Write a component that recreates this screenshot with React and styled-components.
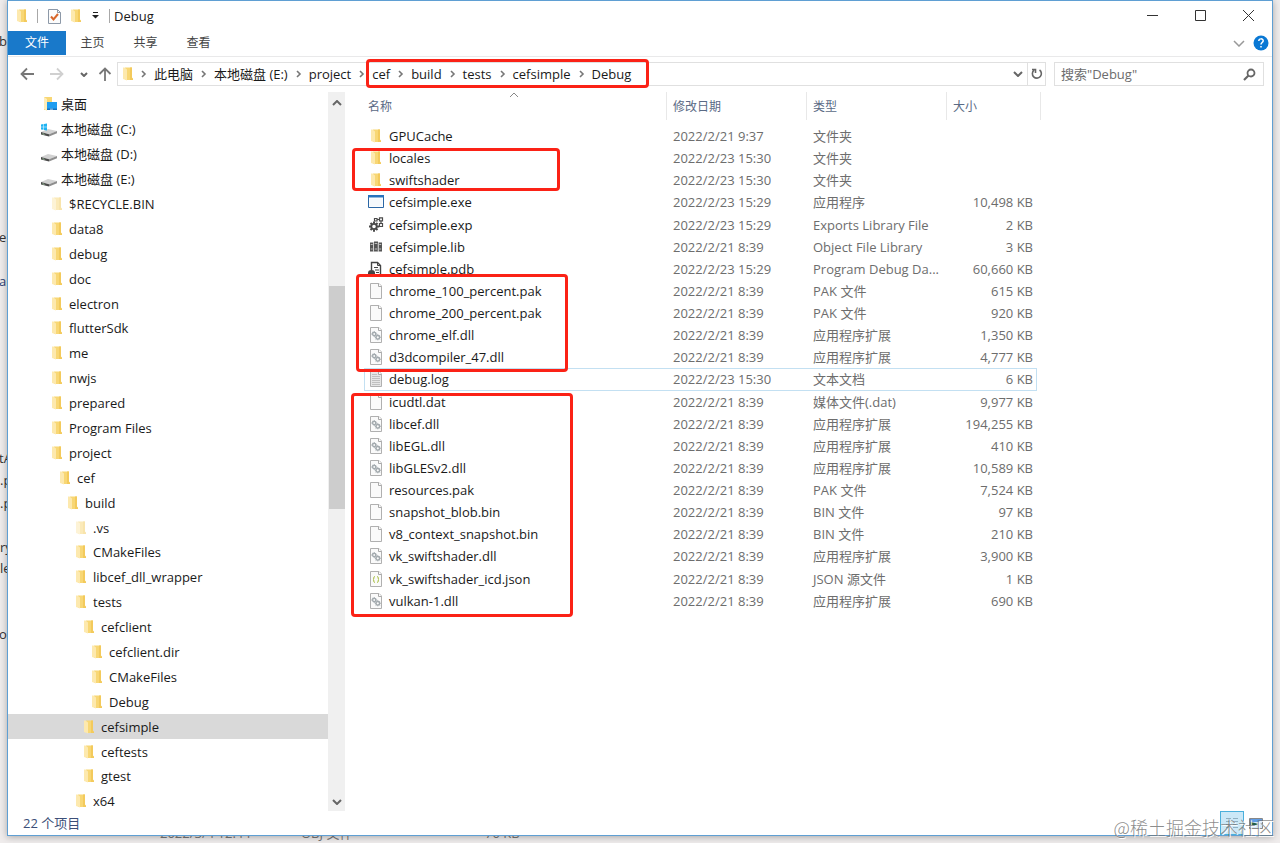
import React from 'react'
import styled, { createGlobalStyle, css } from 'styled-components'

const GlobalStyle = createGlobalStyle`
  * {
    box-sizing: border-box;
  }
  body {
    margin: 0;
    background: #efecec;
    color: #1a1a1a;
    font-family: 'Open Sans', 'Noto Sans CJK SC', sans-serif;
    font-size: 13px;
    line-height: 20px;
  }
  button, input {
    font: inherit;
    color: inherit;
    margin: 0;
    padding: 0;
    border: 0;
    background: none;
  }
  a {
    color: inherit;
    text-decoration: none;
  }
  svg {
    display: block;
    flex: none;
  }
`

const Desktop = styled.div`
  position: relative;
  min-height: 100vh;
  padding: 0 7px 7px;
  overflow: hidden;
`

const Behind = styled.span`
  position: absolute;
  left: ${props => props.$x}px;
  top: ${props => props.$y}px;
  color: ${props => props.$color || '#333'};
  white-space: nowrap;
`

const Window = styled.div`
  position: relative;
  display: flex;
  flex-direction: column;
  height: calc(100vh - 7px);
  min-height: 600px;
  background: #fff;
  border: 1px solid #5f9fd3;
  box-shadow: 0 1px 7px rgba(0, 0, 0, 0.3);
`

const TitleBar = styled.header`
  display: flex;
  align-items: center;
  height: 29px;
  padding-left: 9px;
`

const QuickAccess = styled.div`
  display: flex;
  align-items: center;
  gap: 10px;
`

const Divider = styled.span`
  width: 1px;
  height: 14px;
  background: #a8a8a8;
`

const Title = styled.h1`
  margin: 0 auto 0 4px;
  font-size: 13px;
  font-weight: 400;
`

const WindowButton = styled.button`
  display: flex;
  align-items: center;
  justify-content: center;
  width: 48px;
  height: 29px;
`

const Ribbon = styled.nav`
  display: flex;
  align-items: center;
  height: 27px;
  padding-right: 3px;
  border-bottom: 1px solid #e9e9ea;
  .right {
    display: flex;
    gap: 8px;
    margin-left: auto;
  }
`

const Tab = styled.button`
  width: 53px;
  height: 24px;
  font-size: 12px;
  color: #444;
  ${props => props.$file && css`
    width: 58px;
    background: #1979ca;
    color: #fff;
  `}
`

const AddressRow = styled.div`
  display: flex;
  align-items: center;
  height: 34px;
  padding: 0 8px 0 12px;
`

const Arrows = styled.div`
  display: flex;
  align-items: center;
  gap: 16px;
  margin-right: 5px;
  .recent {
    display: flex;
    align-items: center;
    gap: 10px;
  }
`

const AddressBox = styled.div`
  display: flex;
  align-items: center;
  flex: 1;
  height: 24px;
  padding-left: 5px;
  border: 1px solid #e0e0e0;
  .end {
    display: flex;
    align-items: center;
    justify-content: center;
    width: 18px;
    height: 22px;
  }
  .end.expand {
    margin-left: auto;
  }
  .end.refresh {
    border-left: 1px solid #e0e0e0;
  }
`

const Crumbs = styled.div`
  display: flex;
  align-items: center;
  position: relative;
  white-space: nowrap;
`

const SearchBox = styled.label`
  display: flex;
  align-items: center;
  width: 210px;
  height: 24px;
  margin-left: 8px;
  padding: 0 7px 0 6px;
  border: 1px solid #e0e0e0;
  input {
    flex: 1;
    min-width: 0;
    outline: 0;
  }
  input::placeholder {
    color: #6d6d6d;
    opacity: 1;
  }
`

const Body = styled.div`
  display: flex;
  flex: 1;
  min-height: 0;
  padding-top: 1px;
`

const Tree = styled.nav`
  display: flex;
  width: 338px;
  overflow: hidden;
`

const TreeList = styled.ul`
  display: flex;
  flex-direction: column;
  flex: 1;
  margin: 0 0 -3px;
  padding: 0;
  list-style: none;
`

const TreeItem = styled.li`
  display: flex;
  align-items: center;
  flex: 1;
  min-height: 0;
  padding-left: ${props => 33 + props.$level * 8}px;
  background: ${props => props.$selected ? '#d9d9d9' : 'transparent'};
  white-space: nowrap;
  a {
    display: flex;
    align-items: center;
    gap: 4px;
  }
`

const Scrollbar = styled.div`
  display: flex;
  flex-direction: column;
  align-items: center;
  justify-content: space-between;
  position: relative;
  width: 17px;
  margin-right: 1px;
  padding: 8px 0 6px;
  background: #f0f0f0;
  &::after {
    content: '';
    position: absolute;
    top: 27%;
    width: 16px;
    height: 31%;
    background: #cdcdcd;
  }
`

const Content = styled.main`
  position: relative;
  flex: 1;
  padding-left: 18px;
`

const FileTable = styled.table`
  width: 673px;
  height: 520px;
  table-layout: fixed;
  border-collapse: collapse;
  color: #6d6d6d;
  th, td {
    padding: 0 6px;
    text-align: left;
    font-weight: 400;
    white-space: nowrap;
    overflow: hidden;
    text-overflow: ellipsis;
  }
  th {
    position: relative;
    height: 33px;
    padding-bottom: 4px;
    font-size: 12px;
    color: #5a6a85;
    overflow: visible;
  }
  th::after {
    content: '';
    position: absolute;
    top: 0;
    right: 0;
    width: 1px;
    height: 28px;
    background: #e8e8e8;
  }
  th:first-child, td:first-child {
    padding-left: 4px;
  }
  th:last-child::after {
    right: -4px;
  }
  td:last-child {
    padding-right: 4px;
    text-align: right;
  }
  .sort {
    position: absolute;
    top: 0;
    left: 145px;
  }
`

const FileRow = styled.tr`
  height: 22px;
  ${props => props.$focused && css`
    outline: 1px solid #c3e0f2;
    outline-offset: -1px;
  `}
`

const FileName = styled.a`
  display: flex;
  align-items: center;
  gap: 5px;
  color: #1a1a1a;
`

const Mark = styled.div`
  position: absolute;
  top: ${props => props.$top}px;
  left: ${props => props.$left}px;
  width: ${props => props.$width}px;
  height: ${props => props.$height}px;
  border: 3px solid #fb2216;
  border-radius: 4px;
  pointer-events: none;
`

const StatusBar = styled.footer`
  display: flex;
  align-items: center;
  height: 24px;
  padding: 0 4px 0 15px;
  color: #3c4f78;
  .views {
    display: flex;
    margin-left: auto;
  }
`

const ViewButton = styled.button`
  display: flex;
  align-items: center;
  justify-content: center;
  width: 24px;
  height: 24px;
  border: 1px solid ${props => props.$active ? '#4bb0dc' : 'transparent'};
  background: ${props => props.$active ? '#cbe8f7' : 'transparent'};
`

const Watermark = styled.div`
  position: absolute;
  right: 6px;
  bottom: 4px;
  font-family: 'Noto Sans CJK SC', sans-serif;
  font-size: 18px;
  font-weight: 300;
  line-height: 24px;
  color: rgba(110, 110, 110, 0.8);
  text-shadow: 1px 1px 0 #fff;
  pointer-events: none;
`

const Folder = ({ faded, tight }) => (
  <svg width={tight ? 10 : 16} height='16' viewBox={tight ? '3 0 10 16' : '0 0 16 16'} opacity={faded ? 0.5 : 1}>
    <path d='M5 1.500h7v10l1 1V14H5z' fill='#f8d775' />
    <path d='M10 1.500h2v10.500l1 1v1h-3z' fill='#f3ca5c' />
    <path d='M3 1.500h1.500L7 3.500v11L3 13z' fill='#fde9ae' />
  </svg>
)

const DesktopIcon = () => (
  <svg width='16' height='16' viewBox='0 0 16 16'>
    <path d='M3 1h8v13H3z' fill='#f8d775' />
    <path d='M3 1l3 2v12l-3-2z' fill='#ffedb8' />
    <path d='M6 6h10v8H6z' fill='#1f9df0' />
    <path d='M6 12.500h10V14H6z' fill='#1673be' />
    <path d='M9 13.200h3' stroke='#fff' strokeWidth='0.600' />
  </svg>
)

const Drive = ({ system }) => (
  <svg width='16' height='16' viewBox='0 0 16 16'>
    <path d='M0 11l7-3 9 2-8 3.200z' fill='#d2d2d2' />
    <path d='M0 11l8 2.200V15.500l-8-2z' fill='#4a4a4a' />
    <path d='M8 13.200L16 10v2.300l-8 3.200z' fill='#8e8e8e' />
    <path d='M1.500 12.800l2 .5' stroke='#b5e8b5' strokeWidth='0.800' />
    {system && <path d='M0 3.500l2.500-.4v2.600H0zM3 3l3-.5v3.200H3zM0 6.200h2.500v2.600L0 8.400zM3 6.200h3v3.200L3 8.900z' fill='#1fb3f2' />}
  </svg>
)

const Page = ({ kind }) => (
  <svg width='16' height='16' viewBox='0 0 16 16'>
    <path d='M2.500.500h8.500l2.500 2.500v12.500h-11z' fill={kind === 'log' ? '#e6e6e6' : '#fafafa'} stroke='#b0b0b0' />
    <path d='M10.500.500v3h3' fill='#fff' stroke='#a9a9a9' />
    {kind === 'dll' && (
      <g fill='none' stroke='#a3aaae'>
        <circle cx='6.200' cy='7' r='1.600' strokeWidth='1.400' />
        <circle cx='9.800' cy='10.300' r='1.800' strokeWidth='1.400' />
        <path d='M6.200 4v1.200M3.200 7h1.200M6.200 8.800V10M8 7h1.200M9.800 7.200v1.200M6.800 10.300H8M11.600 10.300h1.200M9.800 12.100v1.200M4.200 5l.8.8M7.400 5.800l.8-.8M11 9.100l.8-.8M8.500 11.600l-.8.8M11 11.600l.8.8' />
      </g>
    )}
    {kind === 'log' && <path d='M4 3.500h5M4 5.500h8M4 7.500h8M4 9.500h8M4 11.500h8M4 13.500h8' stroke='#c0c0c0' />}
    {kind === 'json' && <path d='M6.800 5.500C5 5.500 6.600 8.300 5 8.500c1.600.2 0 3 1.800 3M9.200 5.500c1.800 0 .2 2.800 1.800 3-1.600.2 0 3-1.800 3' fill='none' stroke='#a5bd3a' />}
  </svg>
)

const Exe = () => (
  <svg width='16' height='16' viewBox='0 0 16 16'>
    <path d='M.500 1.500h15v12H.500z' fill='#fff' stroke='#2a66a5' />
    <path d='M0 1h16v2.500H0z' fill='#2873bd' />
    <path d='M1.500 4.500h13v8h-13z' fill='#f4f8fc' />
  </svg>
)

const Exp = () => (
  <svg width='16' height='16' viewBox='0 0 16 16' fill='none' stroke='#4a4a4a'>
    <circle cx='6' cy='9.500' r='2.700' strokeWidth='1.800' />
    <path d='M6 4.500v2M6 12.500v2.300M1 9.500h2M9 9.500h2.300M2.500 6L4 7.500M8 11.500l1.500 1.500M2.500 13L4 11.500M8 7.500L9.500 6' strokeWidth='2' />
    <path d='M6.500 1.500h2.500v2.500H6.500zM11.500.800h3v3h-3zM11.500 6.500h3v3h-3zM9 2.500h3M13 4v3' strokeWidth='1.200' />
  </svg>
)

const Lib = () => (
  <svg width='16' height='16' viewBox='0 0 16 16'>
    <path d='M2 3.500h3.500v9H2zM6 2.500h4v10H6zM10.500 3.500H14v9h-3.500z' fill='#555' />
    <path d='M2.700 5.500h2M6.700 4.500h2.500M11.200 5.500h2M2.700 10h2M6.700 10h2.500M11.200 10h2M5.500 4v8.500M10.200 4v8.500' stroke='#d8d8d8' strokeWidth='0.800' />
  </svg>
)

const Pdb = () => (
  <svg width='16' height='16' viewBox='0 0 16 16' fill='none' stroke='#444'>
    <path d='M3.500 9V1.500h6l3 3v10H7' strokeWidth='1.400' />
    <path d='M9.500 1.500v3h3M6 6.500h4M7 9h4M8 11.500h3' />
    <path d='M0 12a3.500 3 0 0 1 7 0v3H0z' fill='#444' stroke='none' />
  </svg>
)

const Chevron = ({ d = 'M1 1l4 4 4-4', width = 10, height = 6, color = '#666', stroke = 2, className }) => (
  <svg className={className} width={width} height={height} viewBox={`0 0 ${width} ${height}`} fill='none' stroke={color} strokeWidth={stroke}>
    <path d={d} />
  </svg>
)

const CrumbArrow = () => (
  <svg width='21' height='10' viewBox='0 0 21 10' fill='none' stroke='#777' strokeWidth='1.600'>
    <path d='M9 2l3 3-3 3' />
  </svg>
)

const Arrow = ({ d, color = '#777' }) => (
  <svg width='14' height='14' viewBox='0 0 14 14' fill='none' stroke={color} strokeWidth='1.800'>
    <path d={d} />
  </svg>
)

const fileIcons = {
  folder: <Folder />,
  exe: <Exe />,
  exp: <Exp />,
  lib: <Lib />,
  pdb: <Pdb />,
}

const tree = [
  [0, '桌面', 'desktop'],
  [0, '本地磁盘 (C:)', 'system'],
  [0, '本地磁盘 (D:)', 'drive'],
  [0, '本地磁盘 (E:)', 'drive'],
  [1, '$RECYCLE.BIN', 'hidden'],
  [1, 'data8'],
  [1, 'debug'],
  [1, 'doc'],
  [1, 'electron'],
  [1, 'flutterSdk'],
  [1, 'me'],
  [1, 'nwjs'],
  [1, 'prepared'],
  [1, 'Program Files'],
  [1, 'project'],
  [2, 'cef'],
  [3, 'build'],
  [4, '.vs', 'hidden'],
  [4, 'CMakeFiles'],
  [4, 'libcef_dll_wrapper'],
  [4, 'tests'],
  [5, 'cefclient'],
  [6, 'cefclient.dir'],
  [6, 'CMakeFiles'],
  [6, 'Debug'],
  [5, 'cefsimple'],
  [5, 'ceftests'],
  [5, 'gtest'],
  [4, 'x64'],
]

const files = [
  ['folder', 'GPUCache', '2022/2/21 9:37', '文件夹', ''],
  ['folder', 'locales', '2022/2/23 15:30', '文件夹', ''],
  ['folder', 'swiftshader', '2022/2/23 15:30', '文件夹', ''],
  ['exe', 'cefsimple.exe', '2022/2/23 15:29', '应用程序', '10,498 KB'],
  ['exp', 'cefsimple.exp', '2022/2/23 15:29', 'Exports Library File', '2 KB'],
  ['lib', 'cefsimple.lib', '2022/2/21 8:39', 'Object File Library', '3 KB'],
  ['pdb', 'cefsimple.pdb', '2022/2/23 15:29', 'Program Debug Da...', '60,660 KB'],
  ['page', 'chrome_100_percent.pak', '2022/2/21 8:39', 'PAK 文件', '615 KB'],
  ['page', 'chrome_200_percent.pak', '2022/2/21 8:39', 'PAK 文件', '920 KB'],
  ['dll', 'chrome_elf.dll', '2022/2/21 8:39', '应用程序扩展', '1,350 KB'],
  ['dll', 'd3dcompiler_47.dll', '2022/2/21 8:39', '应用程序扩展', '4,777 KB'],
  ['log', 'debug.log', '2022/2/23 15:30', '文本文档', '6 KB'],
  ['page', 'icudtl.dat', '2022/2/21 8:39', '媒体文件(.dat)', '9,977 KB'],
  ['dll', 'libcef.dll', '2022/2/21 8:39', '应用程序扩展', '194,255 KB'],
  ['dll', 'libEGL.dll', '2022/2/21 8:39', '应用程序扩展', '410 KB'],
  ['dll', 'libGLESv2.dll', '2022/2/21 8:39', '应用程序扩展', '10,589 KB'],
  ['page', 'resources.pak', '2022/2/21 8:39', 'PAK 文件', '7,524 KB'],
  ['page', 'snapshot_blob.bin', '2022/2/21 8:39', 'BIN 文件', '97 KB'],
  ['page', 'v8_context_snapshot.bin', '2022/2/21 8:39', 'BIN 文件', '210 KB'],
  ['dll', 'vk_swiftshader.dll', '2022/2/21 8:39', '应用程序扩展', '3,900 KB'],
  ['json', 'vk_swiftshader_icd.json', '2022/2/21 8:39', 'JSON 源文件', '1 KB'],
  ['dll', 'vulkan-1.dll', '2022/2/21 8:39', '应用程序扩展', '690 KB'],
]

const treeIcon = (kind) => {
  if (kind === 'desktop') return <DesktopIcon />
  if (kind === 'system') return <Drive system />
  if (kind === 'drive') return <Drive />
  return <Folder faded={kind === 'hidden'} />
}

const crumbs = (names) => names.map((name, i) => (
  <React.Fragment key={name}>
    {i > 0 && <CrumbArrow />}
    <a href='#'>{name}</a>
  </React.Fragment>
))

export default function App() {
  return (
    <Desktop>
      <GlobalStyle />
      <Behind $x={-1} $y={31}>b</Behind>
      <Behind $x={-1} $y={227}>e.</Behind>
      <Behind $x={-1} $y={271} $color='#2b3f75'>an</Behind>
      <Behind $x={-1} $y={448}>tA</Behind>
      <Behind $x={0} $y={470}>.p</Behind>
      <Behind $x={0} $y={493}>.p</Behind>
      <Behind $x={0} $y={537}>ry</Behind>
      <Behind $x={0} $y={558}>le</Behind>
      <Behind $x={-1} $y={624}>ob</Behind>
      <Behind $x={160} $y={823} $color='#777'>2022/3/4 12:44</Behind>
      <Behind $x={301} $y={823} $color='#777'>OBJ 文件</Behind>
      <Behind $x={485} $y={823} $color='#777'>70 KB</Behind>

      <Window>
        <TitleBar>
          <QuickAccess>
            <Folder tight />
            <Divider />
            <svg width='13' height='16' viewBox='0 0 13 16' fill='none'>
              <path d='M.500 1.500h9l3 3v11h-12z' fill='#fcfcfc' stroke='#8d99a8' />
              <path d='M9.500 1.500v3h3' stroke='#8d99a8' />
              <path d='M3 8.500l2.500 3L10 6' stroke='#d8672b' strokeWidth='2' />
            </svg>
            <Folder tight />
            <svg width='8' height='7' viewBox='0 0 8 7'>
              <path d='M2 0h5v1H2zM1 3h7L4.500 6.500z' fill='#222' />
            </svg>
            <Divider />
          </QuickAccess>
          <Title>Debug</Title>
          <WindowButton aria-label='最小化'>
            <svg width='11' height='11' stroke='#333'><path d='M0 5.500h11' /></svg>
          </WindowButton>
          <WindowButton aria-label='最大化'>
            <svg width='11' height='11' fill='none' stroke='#333'><path d='M.500.500h10v10H.500z' /></svg>
          </WindowButton>
          <WindowButton aria-label='关闭'>
            <svg width='11' height='11' stroke='#333'><path d='M0 0l11 11M11 0L0 11' /></svg>
          </WindowButton>
        </TitleBar>

        <Ribbon>
          <Tab $file>文件</Tab>
          <Tab>主页</Tab>
          <Tab>共享</Tab>
          <Tab>查看</Tab>
          <div className='right'>
            <button aria-label='展开功能区'><Chevron width={12} height={7} d='M1 1l5 5 5-5' color='#999' stroke={1.5} /></button>
            <button aria-label='帮助'>
              <svg width='16' height='16' viewBox='0 0 16 16' fill='none'>
                <circle cx='8' cy='8' r='7.500' fill='#0a78d4' />
                <path d='M5.800 6c0-2.800 4.400-2.800 4.400-.2C10.200 7.500 8 7.600 8 9.500M8 11v1.500' stroke='#fff' strokeWidth='1.500' />
              </svg>
            </button>
          </div>
        </Ribbon>

        <AddressRow>
          <Arrows>
            <button aria-label='后退'><Arrow d='M14 7H1.500M7 1.500L1.500 7 7 12.500' /></button>
            <button aria-label='前进'><Arrow d='M0 7h12.500M7 1.500L12.500 7 7 12.500' color='#d0d0d0' /></button>
            <div className='recent'>
              <button aria-label='最近浏览的位置'><Chevron width={8} height={5} d='M1 1l3 3 3-3' /></button>
              <button aria-label='上移'><Arrow d='M7 14V1.500M1.500 7L7 1.500 12.500 7' /></button>
            </div>
          </Arrows>
          <AddressBox>
            <Folder tight />
            <Crumbs>
              <CrumbArrow />
              {crumbs(['此电脑', '本地磁盘 (E:)', 'project'])}
              <CrumbArrow />
            </Crumbs>
            <Crumbs>
              {crumbs(['cef', 'build', 'tests', 'cefsimple', 'Debug'])}
              <Mark $top={-5} $left={-6} $width={283} $height={29} />
            </Crumbs>
            <button className='end expand' aria-label='以前的位置'><Chevron /></button>
            <button className='end refresh' aria-label='刷新'>
              <svg width='12' height='12' viewBox='0 0 12 12' fill='none' stroke='#666' strokeWidth='1.600'>
                <path d='M8.500 2a4.500 4.500 0 1 1-5.500.2M1 1.500h3.500V5' />
              </svg>
            </button>
          </AddressBox>
          <SearchBox>
            <input type='text' aria-label='搜索' placeholder='搜索"Debug"' />
            <svg width='13' height='13' viewBox='0 0 13 13' fill='none' stroke='#666'>
              <circle cx='8' cy='5' r='3.500' strokeWidth='1.800' />
              <path d='M5.500 7.500L1 12' strokeWidth='2.200' />
            </svg>
          </SearchBox>
        </AddressRow>

        <Body>
          <Tree>
            <TreeList>
              {tree.map(([level, name, kind], i) => (
                <TreeItem key={i} $level={level} $selected={name === 'cefsimple'}>
                  <a href='#'>{treeIcon(kind)}{name}</a>
                </TreeItem>
              ))}
            </TreeList>
            <Scrollbar>
              <Chevron d='M1 5l4-4 4 4' />
              <Chevron />
            </Scrollbar>
          </Tree>
          <Content>
            <FileTable>
              <colgroup>
                <col width='303' />
                <col width='140' />
                <col width='140' />
                <col width='90' />
              </colgroup>
              <thead>
                <tr>
                  <th>名称<Chevron className='sort' d='M1 5l4-4 4 4' color='#888' stroke={1} /></th>
                  <th>修改日期</th>
                  <th>类型</th>
                  <th>大小</th>
                </tr>
              </thead>
              <tbody>
                {files.map(([kind, name, date, type, size]) => (
                  <FileRow key={name} $focused={kind === 'log'}>
                    <td><FileName href='#'>{fileIcons[kind] || <Page kind={kind} />}{name}</FileName></td>
                    <td>{date}</td>
                    <td>{type}</td>
                    <td>{size}</td>
                  </FileRow>
                ))}
              </tbody>
            </FileTable>
            <Mark $top={56} $left={6} $width={208} $height={43} />
            <Mark $top={182} $left={10} $width={212} $height={98} />
            <Mark $top={301} $left={5} $width={222} $height={224} />
          </Content>
        </Body>

        <StatusBar>
          <span>22 个项目</span>
          <div className='views'>
            <ViewButton $active aria-label='详细信息'>
              <svg width='14' height='12' stroke='#8fb0c2'><path d='M1 1.500h5M8 1.500h5M1 4.500h5M8 4.500h5M1 7.500h5M8 7.500h5M1 10.500h5M8 10.500h5' /></svg>
            </ViewButton>
            <ViewButton aria-label='大图标'>
              <svg width='14' height='11' viewBox='0 0 14 11'>
                <path d='M.500.500h13v10H.500z' fill='#d5e9fa' stroke='#888' />
                <path d='M1 1h12v3H1z' fill='#5f9de6' />
                <path d='M1 4l5 1 3 1-2 1H1z' fill='#1f5d4a' />
              </svg>
            </ViewButton>
          </div>
        </StatusBar>
      </Window>
      <Watermark>@稀土掘金技术社区</Watermark>
    </Desktop>
  )
}
